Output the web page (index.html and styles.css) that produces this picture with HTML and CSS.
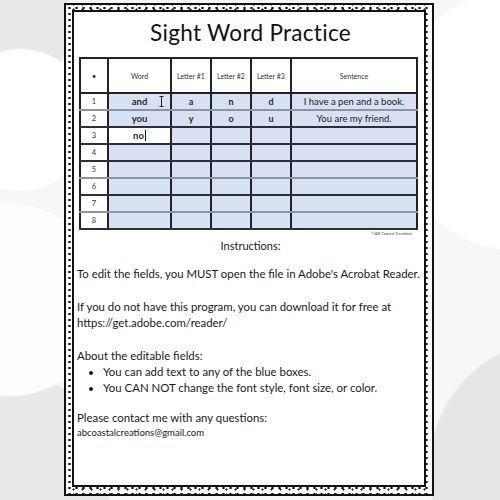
FILE: index.html
```html
<!DOCTYPE html>
<html>
<head>
<meta charset="utf-8">
<link rel="stylesheet" href="styles.css">
</head>
<body>
<div class="frame">
  <div class="sheet">
    <h1 class="title">Sight Word Practice</h1>
    <table class="words">
      <colgroup>
        <col class="c-num"><col class="c-word"><col class="c-let"><col class="c-let"><col class="c-let"><col class="c-sent">
      </colgroup>
      <thead>
        <tr><th class="dot">•</th><th>Word</th><th>Letter #1</th><th>Letter #2</th><th>Letter #3</th><th>Sentence</th></tr>
      </thead>
      <tbody>
        <tr class="thin"><td class="num">1</td><td class="f word cur">and<svg class="ibeam" width="5" height="11" viewBox="0 0 5 11"><path d="M0.5 0.5h4M2.5 0.5v10M0.5 10.5h4" stroke="#222" stroke-width="1" fill="none"/></svg></td><td class="f let">a</td><td class="f let">n</td><td class="f let">d</td><td class="f sent">I have a pen and a book.</td></tr>
        <tr><td class="num">2</td><td class="f word">you</td><td class="f let">y</td><td class="f let">o</td><td class="f let">u</td><td class="f sent">You are my friend.</td></tr>
        <tr><td class="num">3</td><td class="word edit"><span class="caret">no</span></td><td class="f"></td><td class="f"></td><td class="f"></td><td class="f"></td></tr>
        <tr><td class="num">4</td><td class="f"></td><td class="f"></td><td class="f"></td><td class="f"></td><td class="f"></td></tr>
        <tr class="thin"><td class="num">5</td><td class="f"></td><td class="f"></td><td class="f"></td><td class="f"></td><td class="f"></td></tr>
        <tr><td class="num">6</td><td class="f"></td><td class="f"></td><td class="f"></td><td class="f"></td><td class="f"></td></tr>
        <tr class="thin"><td class="num">7</td><td class="f"></td><td class="f"></td><td class="f"></td><td class="f"></td><td class="f"></td></tr>
        <tr><td class="num">8</td><td class="f"></td><td class="f"></td><td class="f"></td><td class="f"></td><td class="f"></td></tr>
      </tbody>
    </table>
    <div class="credit">©AB Coastal Creations</div>
    <h2 class="heading">Instructions:</h2>
    <p class="para first">To edit the fields, you MUST open the file in Adobe's Acrobat Reader.</p>
    <p class="para">If you do not have this program, you can download it for free at https://get.adobe.com/reader/</p>
    <p class="para">About the editable fields:</p>
    <ul class="bullets">
      <li>You can add text to any of the blue boxes.</li>
      <li>You CAN NOT change the font style, font size, or color.</li>
    </ul>
    <p class="para contact">Please contact me with any questions:</p>
    <p class="email">abcoastalcreations@gmail.com</p>
  </div>
</div>
</body>
</html>
```
FILE: styles.css
```css
html, body {
  margin: 0;
  padding: 0;
}
body {
  width: 500px;
  height: 500px;
  overflow: hidden;
  font-family: "Lato", "Open Sans", sans-serif;
  color: #1a1a1a;
  background-color: #f7f7f7;
  background-image:
    radial-gradient(circle at 20px 120px, #ffffff 0, #ffffff 70px, rgba(255,255,255,0) 72px),
    radial-gradient(circle at 10px 300px, #fdfdfd 0, #fdfdfd 95px, rgba(255,255,255,0) 97px),
    radial-gradient(circle at 520px 120px, #ffffff 0, #ffffff 130px, rgba(255,255,255,0) 132px),
    radial-gradient(circle at 560px 470px, #e6e6e6 0, #e6e6e6 130px, rgba(230,230,230,0) 132px),
    radial-gradient(circle at 0px 480px, #e9e9e9 0, #e9e9e9 110px, rgba(233,233,233,0) 112px),
    radial-gradient(circle at -20px 20px, #e8e8e8 0, #e8e8e8 90px, rgba(232,232,232,0) 92px);
}
.frame {
  margin: 3px 0 0 64px;
  border: 2px solid #111;
  padding: 5px 6px 7px 6px;
  width: 354px;
  height: 477px;
  background-color: #fff;
  background-image:
    radial-gradient(circle, #111 0, #111 0.9px, rgba(0,0,0,0) 1.5px),
    radial-gradient(circle, #222 0, #222 0.8px, rgba(0,0,0,0) 1.4px);
  background-size: 7px 6px, 9px 5px;
  background-position: 0 0, 3px 2px;
}
.sheet {
  box-sizing: border-box;
  width: 354px;
  height: 477px;
  border: 2px solid #111;
  background: #fff;
  padding: 0 0 0 3px;
  display: flex;
  flex-direction: column;
  font-size: 11.4px;
  letter-spacing: 0;
}
.title {
  margin: 3px 0 6px 0;
  font-size: 22.5px;
  line-height: 36px;
  font-weight: 400;
  text-align: center;
  color: #111;
  letter-spacing: 0.3px;
}
.words {
  margin-left: 2px;
  width: 337px;
  border-collapse: collapse;
  table-layout: fixed;
  border: 2px solid #222;
}
.c-num { width: 28px; }
.c-word { width: 63px; }
.c-let { width: 40px; }
.c-sent { width: 126px; }
.words th {
  height: 33px;
  font-size: 7px;
  font-weight: 400;
  color: #333;
  border: 2px solid #222;
  padding: 0;
  background: #fff;
}
.words th.dot { font-size: 8px; }
.words td {
  height: 15px;
  padding: 0;
  border-left: 2px solid #222;
  border-right: 2px solid #222;
  border-bottom: 2px solid #2b2f3a;
  text-align: center;
  font-size: 9px;
  line-height: 15px;
  background: #fff;
}
.words tr.thin td {
  border-bottom: 2px solid #8d94a6;
}
.words td.num {
  font-size: 7.5px;
  color: #333;
}
.words td.f {
  background: #d8e1f4;
}
.words td.word {
  font-size: 9.5px;
  font-weight: 700;
  color: #2a2a2a;
  position: relative;
}
.words td.let {
  font-weight: 700;
  font-size: 9px;
  color: #2a2a2a;
}
.words td.sent {
  font-size: 9.5px;
  color: #222;
}
.ibeam {
  position: absolute;
  left: 50px;
  top: 2px;
}
.caret {
  font-weight: 700;
  padding-right: 1px;
  border-right: 1px solid #111;
}
.credit {
  height: 8px;
  font-size: 4px;
  line-height: 8px;
  text-align: right;
  padding-right: 12px;
  color: #444;
}
.heading {
  margin: 1px 0 0 0;
  font-size: 11px;
  line-height: 14px;
  font-weight: 400;
  text-align: center;
  color: #1a1a1a;
}
.para {
  margin: 13px 0 0 0;
  line-height: 16px;
  padding-right: 0;
  white-space: normal;
}
.para.first { white-space: nowrap; }
.para + .para { margin-top: 17px; }
.bullets {
  margin: 0;
  padding: 0 0 0 26px;
  line-height: 16px;
}
.bullets li { padding-left: 0; }
.para.contact { margin-top: 14px; }
.email {
  margin: 0;
  font-size: 9.5px;
  line-height: 14px;
}
```
